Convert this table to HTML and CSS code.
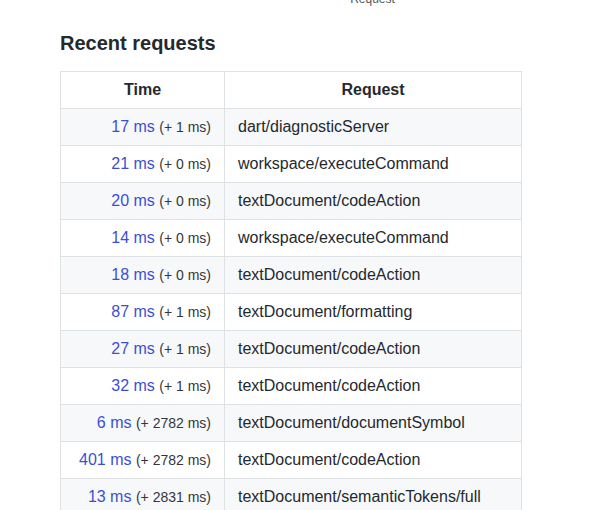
FILE: index.html
```html
<!DOCTYPE html>
<html>
<head>
<meta charset="utf-8">
<link rel="stylesheet" href="styles.css">
</head>
<body>
<div class="page">
  <div class="prev">
    <div class="prev-spacer"></div>
    <div class="prev-label">Request</div>
  </div>
  <h3 class="title">Recent requests</h3>
  <table class="requests">
    <thead>
      <tr><th class="col-time">Time</th><th class="col-req">Request</th></tr>
    </thead>
    <tbody>
      <tr><td class="time"><a class="ms">17 ms</a> <span class="delta">(+ 1 ms)</span></td><td>dart/diagnosticServer</td></tr>
      <tr><td class="time"><a class="ms">21 ms</a> <span class="delta">(+ 0 ms)</span></td><td>workspace/executeCommand</td></tr>
      <tr><td class="time"><a class="ms">20 ms</a> <span class="delta">(+ 0 ms)</span></td><td>textDocument/codeAction</td></tr>
      <tr><td class="time"><a class="ms">14 ms</a> <span class="delta">(+ 0 ms)</span></td><td>workspace/executeCommand</td></tr>
      <tr><td class="time"><a class="ms">18 ms</a> <span class="delta">(+ 0 ms)</span></td><td>textDocument/codeAction</td></tr>
      <tr><td class="time"><a class="ms">87 ms</a> <span class="delta">(+ 1 ms)</span></td><td>textDocument/formatting</td></tr>
      <tr><td class="time"><a class="ms">27 ms</a> <span class="delta">(+ 1 ms)</span></td><td>textDocument/codeAction</td></tr>
      <tr><td class="time"><a class="ms">32 ms</a> <span class="delta">(+ 1 ms)</span></td><td>textDocument/codeAction</td></tr>
      <tr><td class="time"><a class="ms">6 ms</a> <span class="delta">(+ 2782 ms)</span></td><td>textDocument/documentSymbol</td></tr>
      <tr><td class="time"><a class="ms">401 ms</a> <span class="delta">(+ 2782 ms)</span></td><td>textDocument/codeAction</td></tr>
      <tr><td class="time"><a class="ms">13 ms</a> <span class="delta">(+ 2831 ms)</span></td><td>textDocument/semanticTokens/full</td></tr>
    </tbody>
  </table>
</div>
</body>
</html>
```
FILE: styles.css
```css
html, body {
  margin: 0;
  padding: 0;
  background: #ffffff;
}
body {
  font-family: "Liberation Sans", Arial, sans-serif;
  color: #24292e;
  font-size: 16px;
  overflow: hidden;
}
.page {
  padding: 0 60px;
}
.prev {
  display: flex;
  margin-top: -8px;
  height: 14px;
}
.prev-spacer {
  width: 164px;
}
.prev-label {
  width: 297px;
  text-align: center;
  font-size: 12px;
  line-height: 14px;
  color: #555;
}
.title {
  margin: 25px 0 15px;
  font-size: 20px;
  line-height: 25px;
  font-weight: 600;
}
.requests {
  border-collapse: collapse;
  border-spacing: 0;
  width: 462px;
  table-layout: fixed;
}
.requests th,
.requests td {
  border: 1px solid #dfe2e5;
  padding: 6px 13px;
  line-height: 24px;
  height: 24px;
  font-size: 16px;
  box-sizing: content-box;
}
.requests th {
  font-weight: 600;
  text-align: center;
}
.col-time { width: 137px; }
.requests tbody tr:nth-child(odd) {
  background: #f6f8fa;
}
.requests td.time {
  text-align: right;
  white-space: nowrap;
}
.ms {
  color: #3b4fd6;
  text-decoration: none;
}
.delta {
  font-size: 14px;
  line-height: 16px;
  color: #33373c;
}
```
